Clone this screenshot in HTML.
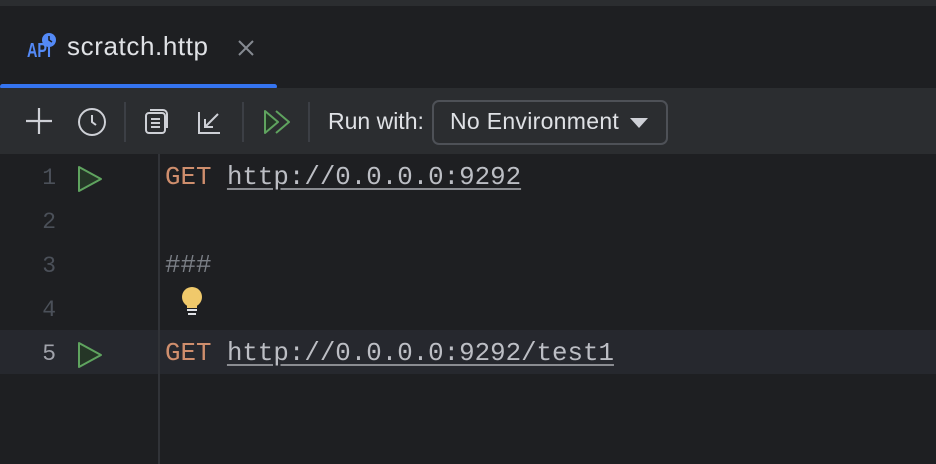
<!DOCTYPE html><html><head><style>
body{margin:0;width:936px;height:464px;background:#1e1f22;position:relative;overflow:hidden;font-family:"Liberation Sans",sans-serif}
.a{position:absolute}
.mono{font-family:"Liberation Mono",monospace;font-size:25.8px;line-height:44px}
.ln{position:absolute;left:30px;width:26px;text-align:right;color:#4b5059;font-family:"Liberation Mono",monospace;font-size:23px;line-height:44px}
.u{color:#bcbec4;text-decoration:underline;text-decoration-color:#8a8c91;text-underline-offset:4px}
.g{color:#cf8e6d}
.sep{position:absolute;top:102px;width:2px;height:40px;background:#3c3f45}
</style></head><body>
<div class="a" style="left:0;top:0;width:936px;height:6px;background:#2b2d30"></div>
<svg class="a" style="left:26px;top:30px" width="32" height="32"><text x="1" y="27" font-family="Liberation Sans" font-size="20" font-weight="bold" fill="#548af7" textLength="24" lengthAdjust="spacingAndGlyphs">API</text><circle cx="23" cy="10" r="7" fill="#548af7"/><path d="M23 6v4l3 2" stroke="#1e1f22" stroke-width="1.6" fill="none"/></svg>
<div class="a" style="left:67px;top:31px;font-size:26px;letter-spacing:0.6px;color:#dfe1e5">scratch.http</div>
<svg class="a" style="left:237px;top:39px" width="18" height="18"><path d="M2 2l14 14M16 2L2 16" stroke="#868a91" stroke-width="2"/></svg>
<div class="a" style="left:0;top:84px;width:277px;height:5px;border-radius:3px;background:#3574f0"></div>
<div class="a" style="left:0;top:88px;width:936px;height:66px;background:#2b2d30"></div>
<svg class="a" style="left:24px;top:106px" width="30" height="30"><path d="M15 2v26M2 15h26" stroke="#ced0d6" stroke-width="2.2"/></svg>
<svg class="a" style="left:77px;top:107px" width="30" height="30"><circle cx="15" cy="15" r="13" stroke="#ced0d6" stroke-width="2" fill="none"/><path d="M15 8v7l4 3" stroke="#ced0d6" stroke-width="2" fill="none"/></svg>
<div class="sep" style="left:124px"></div>
<svg class="a" style="left:144px;top:108px" width="28" height="28"><rect x="2" y="5" width="19" height="20" rx="3" stroke="#ced0d6" stroke-width="2" fill="none"/><path d="M6 2h13a4 4 0 0 1 4 4v14" stroke="#ced0d6" stroke-width="2" fill="none"/><path d="M7 11h9M7 15h9M7 19h9" stroke="#ced0d6" stroke-width="2"/></svg>
<svg class="a" style="left:196px;top:108px" width="28" height="28"><path d="M3 4v21h21M9 19L22 6M9 11v8h8" stroke="#ced0d6" stroke-width="2" fill="none"/></svg>
<div class="sep" style="left:242px"></div>
<svg class="a" style="left:262px;top:109px" width="30" height="28"><path d="M3 2l13 11L3 24z" fill="#253627" stroke="#5fa35f" stroke-width="2" stroke-linejoin="round"/><path d="M14 2l13 11-13 11" fill="none" stroke="#5fa35f" stroke-width="2" stroke-linejoin="round"/></svg>
<div class="sep" style="left:308px"></div>
<div class="a" style="left:328px;top:108px;font-size:23px;color:#dfe1e5">Run with:</div>
<div class="a" style="left:432px;top:100px;width:232px;height:41px;border:2px solid #4e5157;border-radius:7px"></div>
<div class="a" style="left:450px;top:108px;font-size:23px;letter-spacing:0.3px;color:#dfe1e5">No Environment</div>
<svg class="a" style="left:630px;top:117px" width="20" height="12"><path d="M0 1h18l-9 10z" fill="#ced0d6"/></svg>
<div class="a" style="left:0;top:330px;width:936px;height:44px;background:#26282e"></div>
<div class="a" style="left:158px;top:154px;width:2px;height:310px;background:#313338"></div>
<div class="ln" style="top:156px">1</div><div class="ln" style="top:200px">2</div><div class="ln" style="top:244px">3</div><div class="ln" style="top:288px">4</div><div class="ln" style="top:332px;color:#a1a3ab">5</div>
<svg class="a" style="left:76px;top:165px" width="28" height="28"><path d="M3 2l22 12L3 26z" fill="#253627" stroke="#5fa35f" stroke-width="2" stroke-linejoin="round"/></svg>
<svg class="a" style="left:76px;top:341px" width="28" height="28"><path d="M3 2l22 12L3 26z" fill="#253627" stroke="#5fa35f" stroke-width="2" stroke-linejoin="round"/></svg>
<div class="a mono" style="left:165px;top:156px"><span class="g">GET</span> <span class="u">http://0.0.0.0:9292</span></div>
<div class="a mono" style="left:165px;top:244px;color:#7a7e85">###</div>
<svg class="a" style="left:180px;top:286px" width="24" height="32"><circle cx="12" cy="11" r="10" fill="#f0c96b"/><rect x="7" y="14" width="10" height="8" fill="#f0c96b"/><path d="M7 24h10M8 28h8" stroke="#dfe1e5" stroke-width="2"/></svg>
<div class="a mono" style="left:165px;top:332px"><span class="g">GET</span> <span class="u">http://0.0.0.0:9292/test1</span></div>
</body></html>
